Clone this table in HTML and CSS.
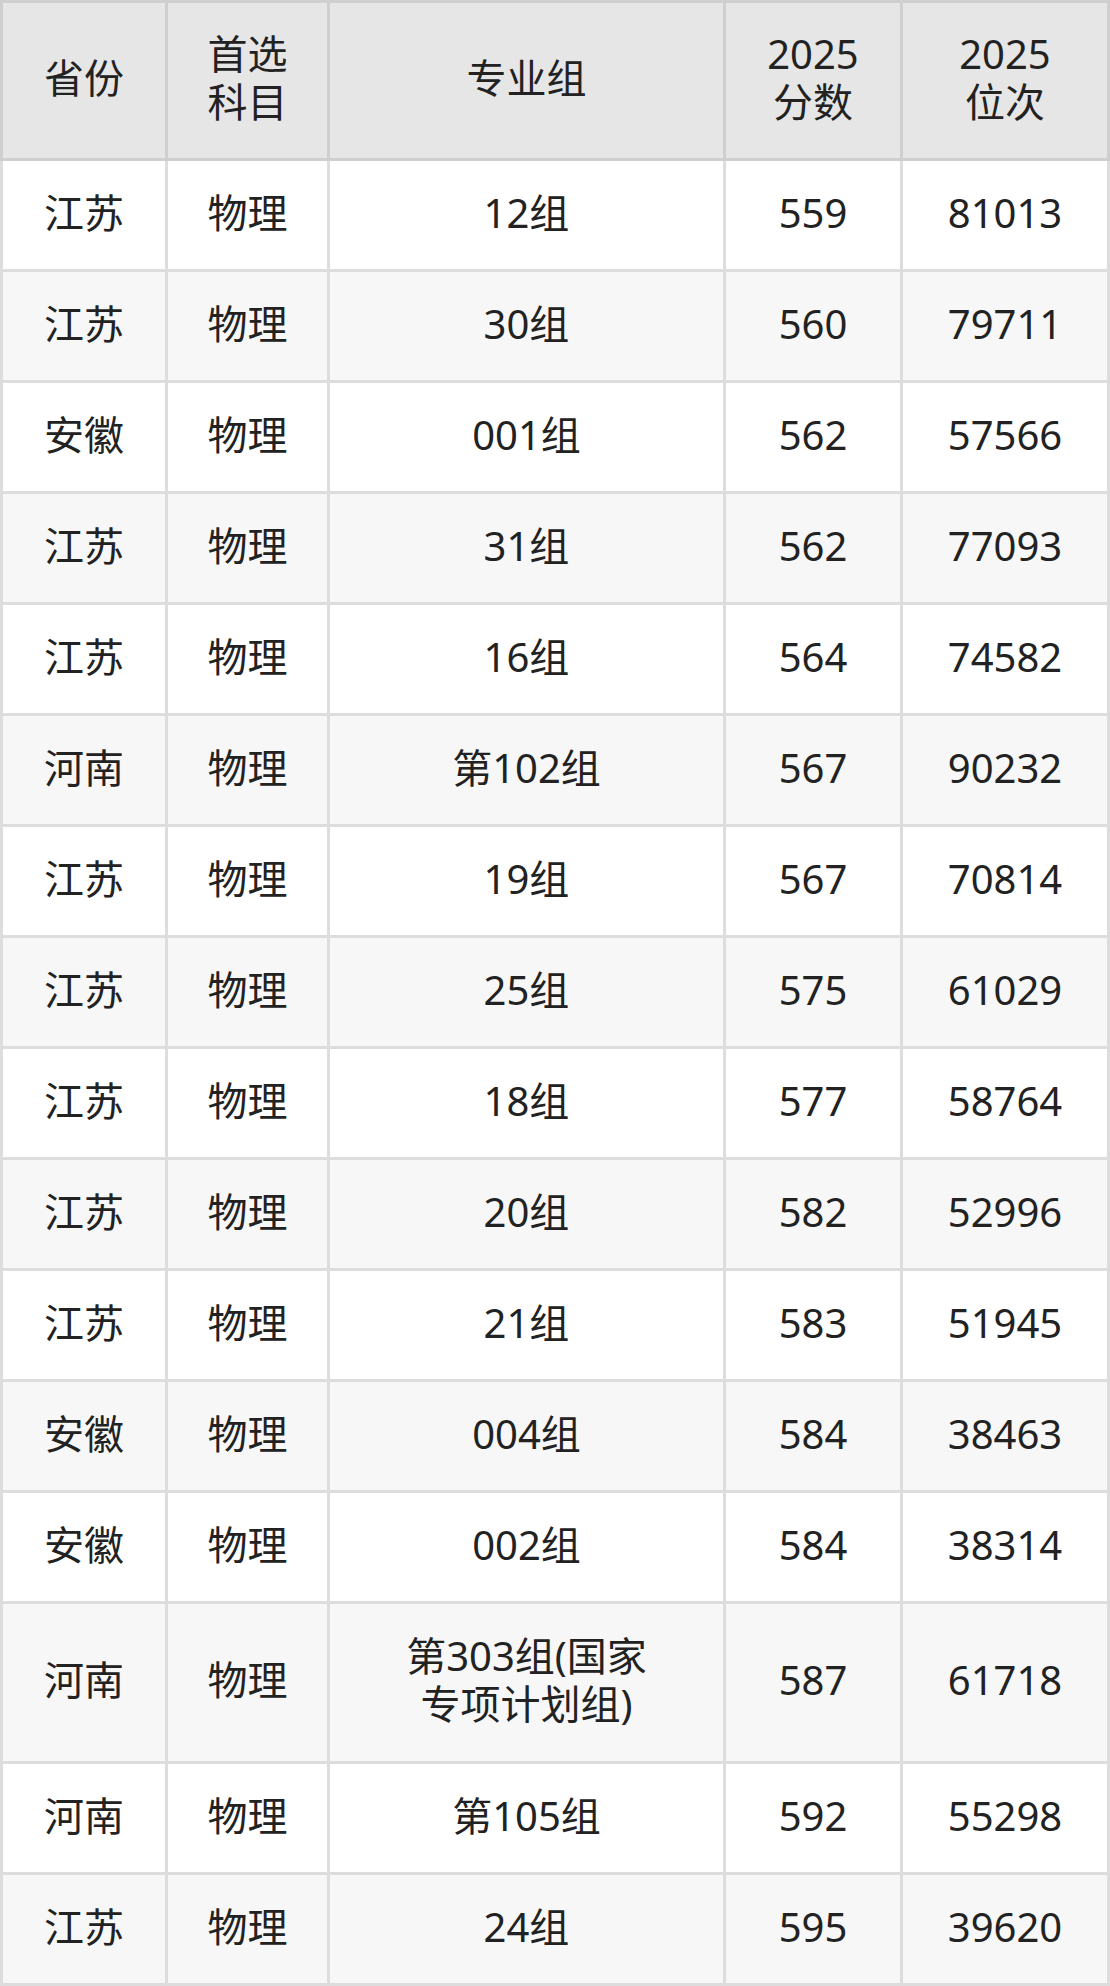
FILE: index.html
```html
<!DOCTYPE html>
<html lang="zh-CN">
<head>
<meta charset="utf-8">
<title>分数线</title>
<link rel="stylesheet" href="styles.css">
</head>
<body>
<table class="score-table">
  <colgroup>
    <col class="c1"><col class="c2"><col class="c3"><col class="c4"><col class="c5">
  </colgroup>
  <thead>
    <tr>
      <th>省份</th>
      <th>首选<br>科目</th>
      <th>专业组</th>
      <th>2025<br>分数</th>
      <th>2025<br>位次</th>
    </tr>
  </thead>
  <tbody>
    <tr><td>江苏</td><td>物理</td><td>12组</td><td>559</td><td>81013</td></tr>
    <tr><td>江苏</td><td>物理</td><td>30组</td><td>560</td><td>79711</td></tr>
    <tr><td>安徽</td><td>物理</td><td>001组</td><td>562</td><td>57566</td></tr>
    <tr><td>江苏</td><td>物理</td><td>31组</td><td>562</td><td>77093</td></tr>
    <tr><td>江苏</td><td>物理</td><td>16组</td><td>564</td><td>74582</td></tr>
    <tr><td>河南</td><td>物理</td><td>第102组</td><td>567</td><td>90232</td></tr>
    <tr><td>江苏</td><td>物理</td><td>19组</td><td>567</td><td>70814</td></tr>
    <tr><td>江苏</td><td>物理</td><td>25组</td><td>575</td><td>61029</td></tr>
    <tr><td>江苏</td><td>物理</td><td>18组</td><td>577</td><td>58764</td></tr>
    <tr><td>江苏</td><td>物理</td><td>20组</td><td>582</td><td>52996</td></tr>
    <tr><td>江苏</td><td>物理</td><td>21组</td><td>583</td><td>51945</td></tr>
    <tr><td>安徽</td><td>物理</td><td>004组</td><td>584</td><td>38463</td></tr>
    <tr><td>安徽</td><td>物理</td><td>002组</td><td>584</td><td>38314</td></tr>
    <tr class="tall"><td>河南</td><td>物理</td><td>第303组(国家<br>专项计划组)</td><td>587</td><td>61718</td></tr>
    <tr><td>河南</td><td>物理</td><td>第105组</td><td>592</td><td>55298</td></tr>
    <tr><td>江苏</td><td>物理</td><td>24组</td><td>595</td><td>39620</td></tr>
  </tbody>
</table>
</body>
</html>
```

FILE: styles.css
```css
html, body {
  margin: 0;
  padding: 0;
  background: #ffffff;
}

.score-table {
  width: 1110px;
  table-layout: fixed;
  border-collapse: separate;
  border-spacing: 0;
  font-family: "Noto Sans", "Noto Sans CJK SC", sans-serif;
  font-size: 40px;
  line-height: 48px;
  color: #222222;
  text-align: center;
}

.c1 { width: 168px; }
.c2 { width: 162px; }
.c3 { width: 396px; }
.c4 { width: 177px; }
.c5 { width: 207px; }

.score-table th,
.score-table td {
  padding: 0 0 5px 0;
  vertical-align: middle;
  border-right: 3px solid #dddddd;
  border-bottom: 3px solid #dddddd;
  font-weight: 400;
}

.score-table th:first-child,
.score-table td:first-child {
  border-left: 3px solid #dddddd;
}

.score-table th {
  background: #e6e6e6;
  height: 150px;
  border-color: #cfcfcf;
  border-top: 3px solid #cfcfcf;
}

.score-table th:first-child {
  border-left-color: #cfcfcf;
}

.score-table td {
  height: 103px;
  background: #ffffff;
}

.score-table tbody tr:nth-child(even) td {
  background: #f7f7f7;
}

.score-table tr.tall td {
  height: 152px;
}
```
